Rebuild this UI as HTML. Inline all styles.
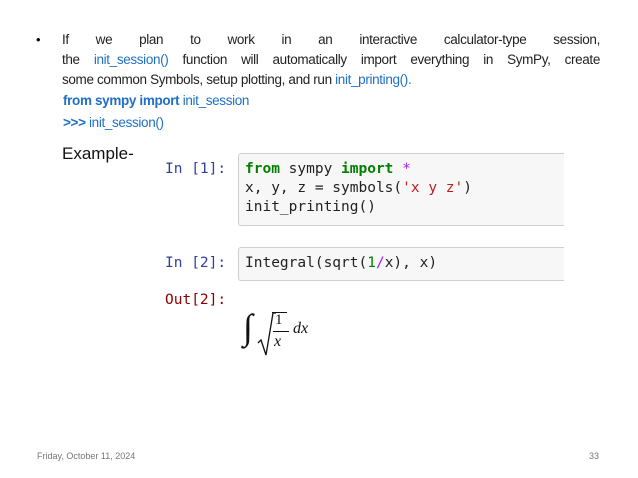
<!DOCTYPE html>
<html><head><style>
body{margin:0;width:638px;height:478px;background:#fff;position:relative;overflow:hidden;font-family:"Liberation Sans",sans-serif}
.a{position:absolute}
.l{left:62px;width:538px;font-size:13.5px;letter-spacing:-0.35px;line-height:20px;color:#222;white-space:nowrap}
.j{text-align:justify;text-align-last:justify;white-space:normal}
.b{color:#1f6fc5}
.m{font-family:"DejaVu Sans Mono","Liberation Mono",monospace;font-size:14.5px;line-height:19px}
.cell{left:238px;width:325px;background:#f7f7f7;border:1px solid #cfcfcf;border-right:none;border-radius:3px 0 0 3px}
.p{color:#303f9f;left:165px}
.k{color:#008000;font-weight:bold}
</style></head><body>
<div class="a" style="left:36px;top:30px;font-size:13px;line-height:20px">•</div>
<div class="a l j" style="top:30px">If we plan to work in an interactive calculator-type session,</div>
<div class="a l j" style="top:50px">the <span class="b">init_session()</span> function will automatically import everything in SymPy, create</div>
<div class="a l" style="top:70px">some common Symbols, setup plotting, and run <span class="b">init_printing().</span></div>
<div class="a b" style="left:63px;top:93px;font-size:13.5px;letter-spacing:-0.35px"><b>from sympy import</b> init_session</div>
<div class="a b" style="left:63px;top:115px;font-size:13.5px;letter-spacing:-0.35px"><b>&gt;&gt;&gt;</b> init_session()</div>
<div class="a" style="left:62px;top:144px;font-size:17px;color:#111">Example-</div>
<div class="a m p" style="top:160px">In [1]:</div>
<div class="a cell" style="top:153px;height:71px"></div>
<div class="a m" style="left:245px;top:160px;color:#222"><span class="k">from</span> sympy <span class="k">import</span> <span style="color:#a020f0">*</span><br>x, y, z = symbols(<span style="color:#ba2121">'x y z'</span>)<br>init_printing()</div>
<div class="a m p" style="top:254px">In [2]:</div>
<div class="a cell" style="top:247px;height:32px"></div>
<div class="a m" style="left:245px;top:254px;color:#222">Integral(sqrt(<span style="color:#008000">1</span><span style="color:#a020f0">/</span>x), x)</div>
<div class="a m" style="left:165px;top:291px;color:#8b0000">Out[2]:</div>
<div class="a" style="left:243px;top:306px;font-family:'Liberation Serif',serif;font-size:36px;font-style:italic;color:#111">∫</div>
<svg class="a" style="left:256px;top:311px" width="20" height="48"><path d="M2 32 L5 29 L10 44 L17 2 L80 2" stroke="#111" stroke-width="1.3" fill="none"/></svg>
<div class="a" style="left:272px;top:312px;width:15px;border-top:1.5px solid #111"></div>
<div class="a" style="left:275px;top:312px;font-family:'Liberation Serif',serif;font-size:15px;color:#111">1</div>
<div class="a" style="left:273px;top:331px;width:16px;border-top:1px solid #111"></div>
<div class="a" style="left:274px;top:333px;font-family:'Liberation Serif',serif;font-size:16px;font-style:italic;color:#111">x</div>
<div class="a" style="left:293px;top:320px;font-family:'Liberation Serif',serif;font-size:16px;font-style:italic;color:#111">dx</div>
<div class="a" style="left:37px;top:451px;font-size:9px;color:#777">Friday, October 11, 2024</div>
<div class="a" style="left:589px;top:451px;font-size:9px;color:#777">33</div>
</body></html>
